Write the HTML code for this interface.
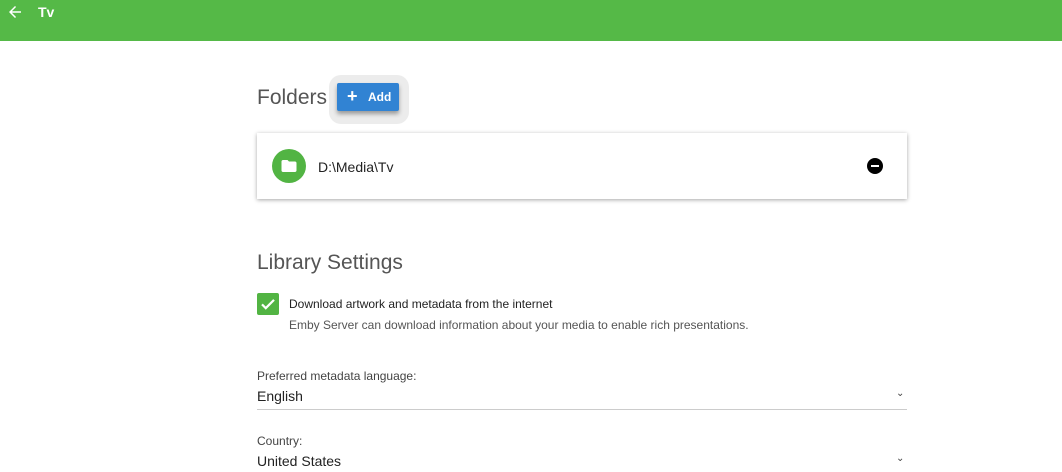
<!DOCTYPE html><html><head><style>
body{margin:0;width:1062px;height:472px;overflow:hidden;background:#fff;font-family:"Liberation Sans",sans-serif;position:relative}
.a{position:absolute}
</style></head><body>
<div class="a" style="left:0;top:0;width:1062px;height:41px;background:#55b947"></div>
<svg class="a" style="left:6px;top:3px" width="18" height="18" viewBox="0 0 24 24"><path d="M20 11H7.8l5.6-5.6L12 4l-8 8 8 8 1.4-1.4L7.8 13H20z" fill="#fff"/></svg>
<div class="a" style="left:38px;top:4px;color:#fff;font-weight:bold;font-size:14px">Tv</div>
<div class="a" style="left:257px;top:86px;font-size:21px;color:#555">Folders</div>
<div class="a" style="left:329px;top:75px;width:80px;height:49px;border-radius:12px;background:#ececec"></div>
<div class="a" style="left:337px;top:83px;width:62px;height:28px;background:#3183d3;border-radius:2px;box-shadow:0 3px 4px rgba(0,0,0,.35);color:#fff;font-weight:bold;font-size:12px;line-height:28px"><span style="font-size:18px;position:absolute;left:10px;top:-1px">+</span><span style="position:absolute;left:31px">Add</span></div>
<div class="a" style="left:257px;top:133px;width:650px;height:66px;background:#fff;box-shadow:0 1px 4px rgba(0,0,0,.35)"></div>
<div class="a" style="left:272px;top:149px;width:34px;height:34px;border-radius:50%;background:#52b443"></div>
<svg class="a" style="left:280px;top:157px" width="18" height="18" viewBox="0 0 24 24"><path d="M10 4H4c-1.1 0-2 .9-2 2v12c0 1.1.9 2 2 2h16c1.1 0 2-.9 2-2V8c0-1.1-.9-2-2-2h-8l-2-2z" fill="#fff"/></svg>
<div class="a" style="left:318px;top:159px;font-size:14px;color:#222">D:\Media\Tv</div>
<div class="a" style="left:867px;top:158px;width:16px;height:16px;border-radius:50%;background:#000"></div>
<div class="a" style="left:871px;top:165px;width:8px;height:2px;background:#fff"></div>
<div class="a" style="left:257px;top:251px;font-size:21px;color:#555">Library Settings</div>
<div class="a" style="left:257px;top:293px;width:22px;height:22px;background:#52b443;border-radius:2px"></div>
<svg class="a" style="left:259px;top:295px" width="18" height="18" viewBox="0 0 24 24"><path d="M4 12.5l5 5L20 6.5" stroke="#fff" stroke-width="3" fill="none"/></svg>
<div class="a" style="left:289px;top:297px;font-size:12px;color:#222">Download artwork and metadata from the internet</div>
<div class="a" style="left:289px;top:318px;font-size:12px;color:#555">Emby Server can download information about your media to enable rich presentations.</div>
<div class="a" style="left:257px;top:369px;font-size:12px;color:#444">Preferred metadata language:</div>
<div class="a" style="left:257px;top:388px;font-size:14px;color:#222">English</div>
<div class="a" style="left:896px;top:388px;font-size:10px;color:#444">⌄</div>
<div class="a" style="left:257px;top:409px;width:650px;height:1px;background:#ccc"></div>
<div class="a" style="left:257px;top:434px;font-size:12px;color:#444">Country:</div>
<div class="a" style="left:257px;top:453px;font-size:14px;color:#222">United States</div>
<div class="a" style="left:896px;top:453px;font-size:10px;color:#444">⌄</div>
</body></html>
